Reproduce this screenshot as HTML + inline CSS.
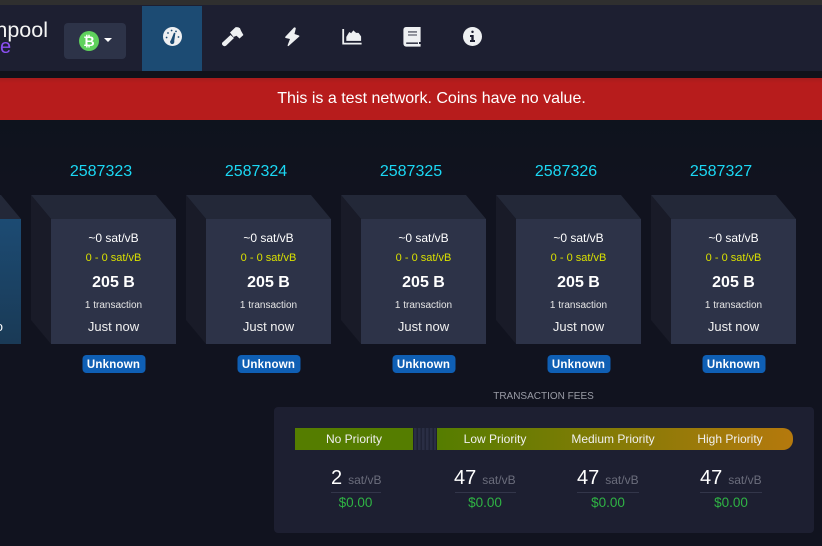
<!DOCTYPE html>
<html><head><meta charset="utf-8">
<style>
html,body{margin:0;padding:0;width:822px;height:546px;overflow:hidden;background:#11131f;font-family:"Liberation Sans",sans-serif;color:#fff}
.a{position:absolute}
.c{position:absolute;text-align:center;white-space:nowrap;transform:translateX(-50%)}
.n{top:163px;font-size:16px;line-height:18px;color:#1bd8f4}
.f1{top:231px;font-size:12px;line-height:14px}
.f2{top:251px;font-size:11px;line-height:14px;color:#d9e000}
.f3{top:274px;font-size:16px;line-height:18px;font-weight:bold}
.f4{top:299px;font-size:10px;line-height:13px;color:#e6e6e6}
.f5{top:319px;font-size:13px;line-height:15px;color:#f0f0f0}
.u{top:355px;width:63px;height:18px;background:#0f5fb4;border-radius:4px;font-size:11.5px;line-height:20px;font-weight:bold;letter-spacing:.2px}
.p{top:432px;font-size:12px;line-height:14px;color:#f0f0f0}
.v{top:466px;font-size:20px;line-height:24px;white-space:nowrap}
.v span{font-size:12px;color:#6b6d7c;margin-left:6px}
.l{top:492px;height:1px;background:#33364a}
.d{top:495px;font-size:13.5px;line-height:15px;color:#2fb344}
</style></head><body>
<div class="a" style="left:0;top:0;width:822px;height:5px;background:#2f2f2f"></div>
<div class="a" style="left:0;top:5px;width:822px;height:66px;background:#1d1f31"></div>
<div class="a" style="left:0;top:71px;width:822px;height:7px;background:#11121a"></div>
<div class="a" style="left:0;top:78px;width:822px;height:42px;background:linear-gradient(#a81c1c 0,#b71c1c 5px,#b71c1c 100%)"></div>
<div class="a" style="left:0;top:120px;width:822px;height:426px;background:linear-gradient(#0e131d,#11131f 60px)"></div>

<div class="a" style="left:-4px;top:17px;font-size:21.5px;line-height:26px;color:#f4f4f4;white-space:nowrap;width:52px;text-align:right;overflow:hidden;direction:rtl">npool</div>
<div class="a" style="left:0;top:35px;font-size:20px;line-height:24px;color:#8a4ff0;height:24px">e</div>

<div class="a" style="left:64px;top:23px;width:62px;height:36px;border-radius:4px;background:#2d3348"></div>
<svg class="a" style="left:79px;top:31px" width="20" height="20" viewBox="0 0 20 20"><circle cx="10" cy="10" r="10" fill="#5fd15c"/><text x="10" y="14.8" text-anchor="middle" font-size="14" font-weight="bold" font-family="Liberation Sans, sans-serif" fill="#fff">₿</text></svg>
<div class="a" style="left:104px;top:38px;width:0;height:0;border-left:4px solid transparent;border-right:4px solid transparent;border-top:4px solid #fff"></div>

<div class="a" style="left:142px;top:6px;width:60px;height:65px;background:#1c4b73"></div>
<svg class="a" style="left:163px;top:27px" width="19" height="19" viewBox="0 0 19 19"><circle cx="9.5" cy="9.5" r="9.5" fill="#eef0f2"/><path d="M7.2 15 L11 5.6 L12.4 6 L11 15.5Z" fill="#1c4b73"/><circle cx="9.2" cy="15" r="2.1" fill="#1c4b73"/><circle cx="3.6" cy="10.5" r=".9" fill="#1c4b73"/><circle cx="5" cy="6" r=".9" fill="#1c4b73"/><circle cx="8.6" cy="3.5" r=".9" fill="#1c4b73"/><circle cx="13" cy="4.4" r=".9" fill="#1c4b73"/><circle cx="15.5" cy="10" r=".9" fill="#1c4b73"/></svg>
<svg class="a" style="left:221px;top:27px" width="23" height="20" viewBox="0 0 23 20"><path d="M1.3 15.6 L9.5 8 L13 11 L5 18.8 Q3.3 19.8 1.8 18.4 Q.4 17 1.3 15.6Z" fill="#eef0f2"/><path d="M9 5.5 L14.5 .3 Q17 -.2 19 1.2 L20 3.8 L22.4 8 L18.5 11.5 L15.5 8.8 L12.5 10 Z" fill="#eef0f2"/></svg>
<svg class="a" style="left:285px;top:27px" width="15" height="20" viewBox="0 0 15 20"><path d="M9 .5 Q10.6 0 10.8 1.5 L9.5 7 L14 8.5 Q14.8 9 14 9.8 L3.6 19 Q2.4 19.6 2.7 18 L5 12 L.6 11 Q-.2 10.5 .4 9.6 Z" fill="#eef0f2"/></svg>
<svg class="a" style="left:342px;top:28px" width="20" height="18" viewBox="0 0 20 18"><path d="M1.2 1 V15.6 H19.6" fill="none" stroke="#eef0f2" stroke-width="1.8"/><path d="M4.6 12.6 V9 L7.4 4.4 L9.2 5.6 L11.4 2.8 L14 5.2 L16.4 5.2 L18.8 8.5 V12.6Z" fill="#eef0f2" stroke="#eef0f2" stroke-width=".6" stroke-linejoin="round"/></svg>
<svg class="a" style="left:403px;top:27px" width="18" height="20" viewBox="0 0 18 20"><path d="M3 0 H17.6 V15 H16 V17 H17.6 V19.6 H3 Q.4 19.3 .4 16.5 V3 Q.4 .3 3 0Z" fill="#eef0f2"/><path d="M5 4.9 H14 M5 8 H14" stroke="#3a3c4c" stroke-width="1.1"/><path d="M3.2 15.4 H15 V17 H3.2Z" fill="#3a3c4c"/></svg>
<svg class="a" style="left:463px;top:27px" width="19" height="19" viewBox="0 0 19 19"><circle cx="9.5" cy="9.5" r="9.5" fill="#eef0f2"/><rect x="8.3" y="3.6" width="2.4" height="2.4" rx="1" fill="#1d1f31"/><path d="M7 8 H10.7 V13 H12 V15 H7 V13 H8.3 V10 H7Z" fill="#1d1f31"/></svg>

<div class="c" style="left:431.5px;top:89px;font-size:16px;line-height:20px;color:#fff">This is a test network. Coins have no value.</div>

<svg class="a" style="left:0;top:190px" width="822" height="160" viewBox="0 190 822 160">
<defs><linearGradient id="b" x1="0" y1="0" x2="0" y2="1"><stop offset="0" stop-color="#1c4b73"/><stop offset="1" stop-color="#1a3a56"/></linearGradient></defs>
<polygon points="-124,195 1,195 21,219 -104,219" fill="#232838"/>
<rect x="-104" y="219" width="125" height="125" fill="url(#b)"/>
<g><polygon points="31,195 156,195 176,219 51,219" fill="#232838"/><polygon points="31,195 51,219 51,344 31,320" fill="#191b28"/><rect x="51" y="219" width="125" height="125" fill="#2d3348"/></g>
<g><polygon points="186,195 311,195 331,219 206,219" fill="#232838"/><polygon points="186,195 206,219 206,344 186,320" fill="#191b28"/><rect x="206" y="219" width="125" height="125" fill="#2d3348"/></g>
<g><polygon points="341,195 466,195 486,219 361,219" fill="#232838"/><polygon points="341,195 361,219 361,344 341,320" fill="#191b28"/><rect x="361" y="219" width="125" height="125" fill="#2d3348"/></g>
<g><polygon points="496,195 621,195 641,219 516,219" fill="#232838"/><polygon points="496,195 516,219 516,344 496,320" fill="#191b28"/><rect x="516" y="219" width="125" height="125" fill="#2d3348"/></g>
<g><polygon points="651,195 776,195 796,219 671,219" fill="#232838"/><polygon points="651,195 671,219 671,344 651,320" fill="#191b28"/><rect x="671" y="219" width="125" height="125" fill="#2d3348"/></g>
</svg>
<div class="a" style="left:0;top:319px;font-size:13px;line-height:15px;color:#fff;width:3px;overflow:hidden;direction:rtl">o</div>

<div class="c n" style="left:101px">2587323</div>
<div class="c f1" style="left:113.5px">~0 sat/vB</div>
<div class="c f2" style="left:113.5px">0 - 0 sat/vB</div>
<div class="c f3" style="left:113.5px">205 B</div>
<div class="c f4" style="left:113.5px">1 transaction</div>
<div class="c f5" style="left:113.5px">Just now</div>
<div class="c u" style="left:113.5px">Unknown</div>

<div class="c n" style="left:256px">2587324</div>
<div class="c f1" style="left:268.5px">~0 sat/vB</div>
<div class="c f2" style="left:268.5px">0 - 0 sat/vB</div>
<div class="c f3" style="left:268.5px">205 B</div>
<div class="c f4" style="left:268.5px">1 transaction</div>
<div class="c f5" style="left:268.5px">Just now</div>
<div class="c u" style="left:268.5px">Unknown</div>

<div class="c n" style="left:411px">2587325</div>
<div class="c f1" style="left:423.5px">~0 sat/vB</div>
<div class="c f2" style="left:423.5px">0 - 0 sat/vB</div>
<div class="c f3" style="left:423.5px">205 B</div>
<div class="c f4" style="left:423.5px">1 transaction</div>
<div class="c f5" style="left:423.5px">Just now</div>
<div class="c u" style="left:423.5px">Unknown</div>

<div class="c n" style="left:566px">2587326</div>
<div class="c f1" style="left:578.5px">~0 sat/vB</div>
<div class="c f2" style="left:578.5px">0 - 0 sat/vB</div>
<div class="c f3" style="left:578.5px">205 B</div>
<div class="c f4" style="left:578.5px">1 transaction</div>
<div class="c f5" style="left:578.5px">Just now</div>
<div class="c u" style="left:578.5px">Unknown</div>

<div class="c n" style="left:721px">2587327</div>
<div class="c f1" style="left:733.5px">~0 sat/vB</div>
<div class="c f2" style="left:733.5px">0 - 0 sat/vB</div>
<div class="c f3" style="left:733.5px">205 B</div>
<div class="c f4" style="left:733.5px">1 transaction</div>
<div class="c f5" style="left:733.5px">Just now</div>
<div class="c u" style="left:733.5px">Unknown</div>

<div class="c" style="left:543.5px;top:390px;font-size:10px;line-height:13px;color:#9a9ca6">TRANSACTION FEES</div>
<div class="a" style="left:274px;top:407px;width:540px;height:126px;background:#1d1f31;border-radius:4px"></div>
<div class="a" style="left:295px;top:428px;width:118px;height:22px;background:#557d00"></div>
<div class="a" style="left:414px;top:428px;width:22px;height:22px;background:repeating-linear-gradient(90deg,#2a2e44 0,#2a2e44 2.5px,#1f2235 2.5px,#1f2235 4px)"></div>
<div class="a" style="left:437px;top:428px;width:356px;height:22px;border-radius:0 10px 10px 0;background:linear-gradient(90deg,#557d00,#b5790d)"></div>
<div class="c p" style="left:354px">No Priority</div>
<div class="c p" style="left:495px">Low Priority</div>
<div class="c p" style="left:613px">Medium Priority</div>
<div class="c p" style="left:730px">High Priority</div>

<div class="a v" style="left:331px">2<span>sat/vB</span></div>
<div class="a l" style="left:331px;width:50px"></div>
<div class="c d" style="left:355.5px">$0.00</div>

<div class="a v" style="left:454px">47<span>sat/vB</span></div>
<div class="a l" style="left:455px;width:61px"></div>
<div class="c d" style="left:485px">$0.00</div>

<div class="a v" style="left:577px">47<span>sat/vB</span></div>
<div class="a l" style="left:577px;width:62px"></div>
<div class="c d" style="left:608px">$0.00</div>

<div class="a v" style="left:700px">47<span>sat/vB</span></div>
<div class="a l" style="left:700px;width:62px"></div>
<div class="c d" style="left:731px">$0.00</div>
</body></html>
